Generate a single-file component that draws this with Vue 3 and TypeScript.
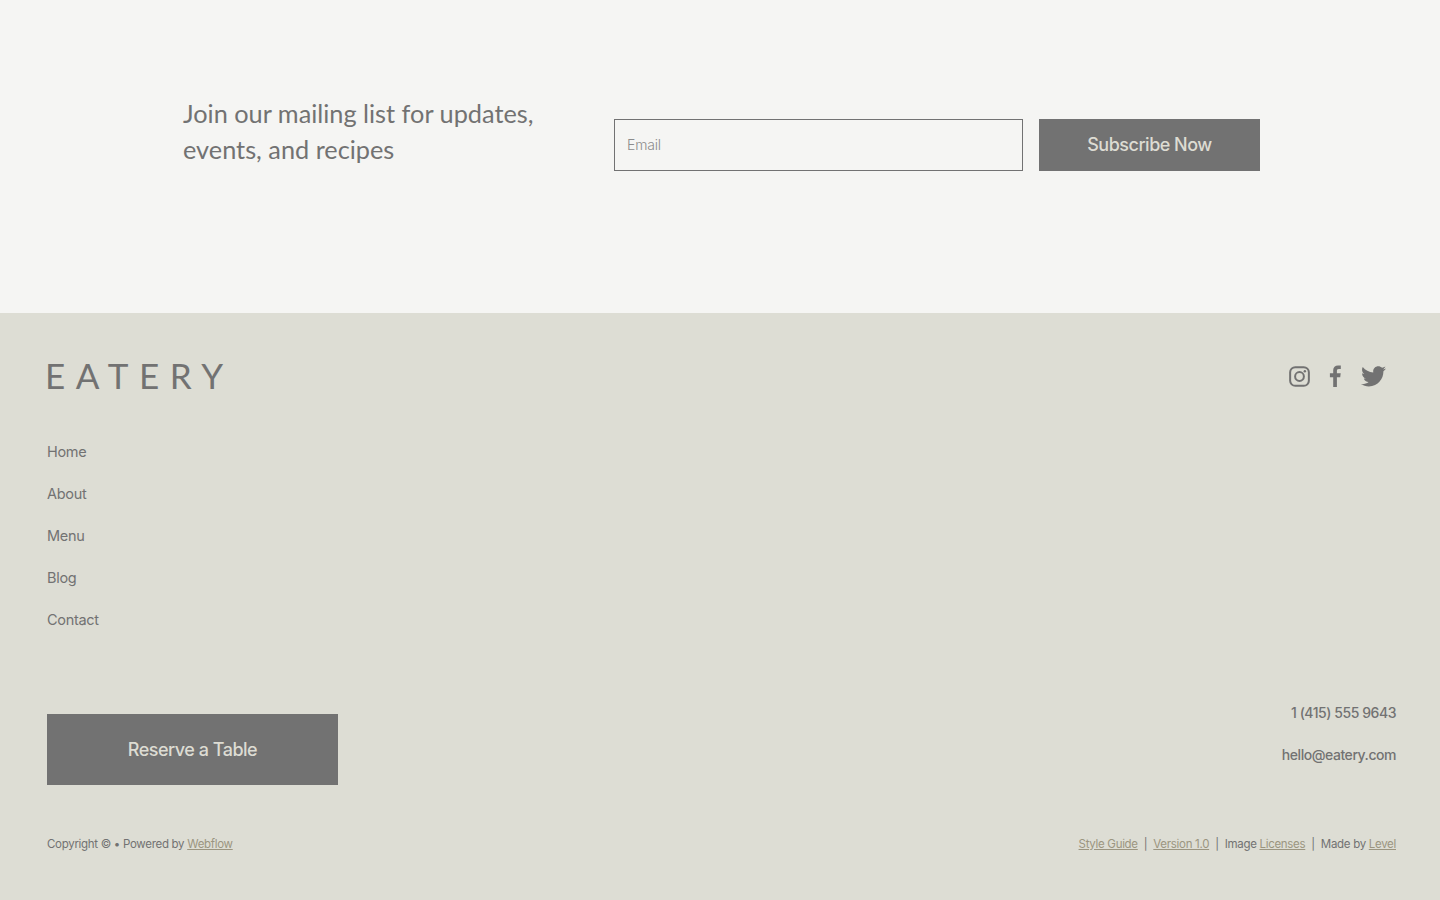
<script setup lang="ts">
const navLinks: string[] = ['Home', 'About', 'Menu', 'Blog', 'Contact']
</script>

<template>
  <div class="page">
    <section class="newsletter">
      <div class="newsletter-inner">
        <h2 class="newsletter-title">Join our mailing list for updates,<br />events, and recipes</h2>
        <form class="newsletter-form" @submit.prevent>
          <input class="email" type="email" placeholder="Email" />
          <button class="btn subscribe" type="submit">Subscribe Now</button>
        </form>
      </div>
    </section>
    <footer class="footer">
      <div class="footer-top">
        <div class="logo">EATERY</div>
        <div class="social">
          <svg width="21" height="21" viewBox="0 0 22 22" fill="none" stroke="#727272" stroke-width="2.1">
            <rect x="1.2" y="1.2" width="19.600" height="19.600" rx="5.4" />
            <circle cx="11" cy="11" r="4.6" />
            <circle cx="16.600" cy="5.400" r="1.3" fill="#727272" stroke="none" />
          </svg>
          <svg width="12" height="22" viewBox="0 0 12 22" fill="#727272">
            <path d="M7.900 22V12.200h3.300l.5-3.900H7.900V5.900c0-1.100.3-1.900 1.900-1.900h2V.6C11.400.5 10.300.4 9 .4 6.200.4 4.200 2.100 4.200 5.300v3H.9v3.900h3.300V22z" />
          </svg>
          <svg class="tw" width="25" height="21" viewBox="0 0 24 20" fill="#727272">
            <path d="M24 2.400c-.9.400-1.800.7-2.800.8 1-.6 1.800-1.600 2.200-2.700-1 .6-2 1-3.100 1.200C19.300.7 18 .1 16.600.1c-2.700 0-4.900 2.200-4.900 4.900 0 .4 0 .8.100 1.100C7.700 5.900 4.100 4 1.700.9 1.200 1.600 1 2.500 1 3.400c0 1.700.9 3.200 2.200 4.100-.8 0-1.600-.2-2.200-.6v.1c0 2.400 1.700 4.400 3.900 4.800-.4.100-.8.200-1.300.2-.3 0-.6 0-.9-.1.600 2 2.400 3.400 4.600 3.400-1.700 1.300-3.800 2.100-6.100 2.100-.4 0-.8 0-1.200-.1 2.200 1.400 4.800 2.200 7.500 2.200 9.100 0 14-7.500 14-14v-.6c1-.7 1.800-1.600 2.500-2.500z" />
          </svg>
        </div>
      </div>
      <nav class="nav">
        <a v-for="link in navLinks" :key="link" class="nav-link" href="#">{{ link }}</a>
      </nav>
      <div class="footer-cta">
        <a class="btn reserve" href="#">Reserve a Table</a>
        <div class="contact">
          <a href="#">1 (415) 555 9643</a>
          <a href="#">hello@eatery.com</a>
        </div>
      </div>
      <div class="legal">
        <div>Copyright © • Powered by <a href="#">Webflow</a></div>
        <div class="legal-right">
          <a href="#">Style Guide</a><span class="sep">|</span><a href="#">Version 1.0</a><span class="sep">|</span>Image&nbsp;<a href="#">Licenses</a><span class="sep">|</span>Made by&nbsp;<a href="#">Level</a>
        </div>
      </div>
    </footer>
  </div>
</template>

<style>
body { margin: 0; }
</style>

<style scoped>
.page {
  height: 900px;
  overflow: hidden;
  display: flex;
  flex-direction: column;
  background: #f5f5f3;
  color: #727272;
  font-family: "Inter", "Noto Sans", sans-serif;
}
.newsletter {
  height: 313px;
  box-sizing: border-box;
  padding: 95px 180px 0 183px;
}
.newsletter-inner {
  display: flex;
  align-items: flex-start;
}
.newsletter-title {
  width: 431px;
  margin: 0;
  font-family: "Lato", sans-serif;
  font-size: 25.300px;
  font-weight: 400;
  line-height: 36px;
  color: #727272;
}
.newsletter-form {
  display: flex;
  gap: 16px;
  margin-top: 24px;
}
.email {
  box-sizing: border-box;
  width: 409px;
  height: 52px;
  padding: 0 12px 2px;
  background: #f5f5f3;
  border: 1px solid #727272;
  font-family: "Inter", sans-serif;
  font-size: 14px;
  font-weight: 300;
  letter-spacing: -0.2px;
  outline: none;
}
.email::placeholder { color: #8c8c8c; }
.btn {
  display: flex;
  align-items: center;
  justify-content: center;
  box-sizing: border-box;
  border: 0;
  background: #727272;
  color: #dddcd3;
  font-family: "Inter", sans-serif;
  font-size: 18px;
  font-weight: 500;
  letter-spacing: -0.5px;
  text-decoration: none;
}
.subscribe { width: 221px; height: 52px; padding-bottom: 2px; }
.footer {
  flex: 1;
  box-sizing: border-box;
  padding: 48px 44px 0 47px;
  background: #ddddd4;
}
.footer-top {
  display: flex;
  justify-content: space-between;
  align-items: center;
  height: 30px;
}
.logo {
  font-family: "Lato", sans-serif;
  font-weight: 400;
  font-size: 35px;
  line-height: 30px;
  letter-spacing: 10.6px;
  color: #727272;
  margin: -3px 0 0 -2px;
}
.social {
  display: flex;
  align-items: center;
  gap: 19px;
  margin-right: 10px;
}
.tw { margin-left: 1px; }
.nav {
  display: flex;
  flex-direction: column;
  align-items: flex-start;
  gap: 18px;
  margin-top: 49px;
}
.nav-link {
  font-size: 14.500px;
  line-height: 24px;
  font-weight: 400;
  letter-spacing: -0.3px;
  color: #727272;
  text-decoration: none;
}
.footer-cta {
  display: flex;
  justify-content: space-between;
  align-items: flex-start;
  margin-top: 82px;
}
.reserve { width: 291px; height: 71px; }
.contact {
  display: flex;
  flex-direction: column;
  align-items: flex-end;
  gap: 18px;
  margin-top: -13px;
  font-size: 14px;
  line-height: 24px;
  font-weight: 500;
  letter-spacing: -0.45px;
}
.contact a { color: #727272; text-decoration: none; }
.legal {
  display: flex;
  justify-content: space-between;
  margin-top: 49px;
  font-size: 11.500px;
  line-height: 21px;
  letter-spacing: -0.3px;
  color: #727272;
}
.legal a { color: #9b9580; text-decoration: underline; }
.sep { margin: 0 6px; }
</style>
